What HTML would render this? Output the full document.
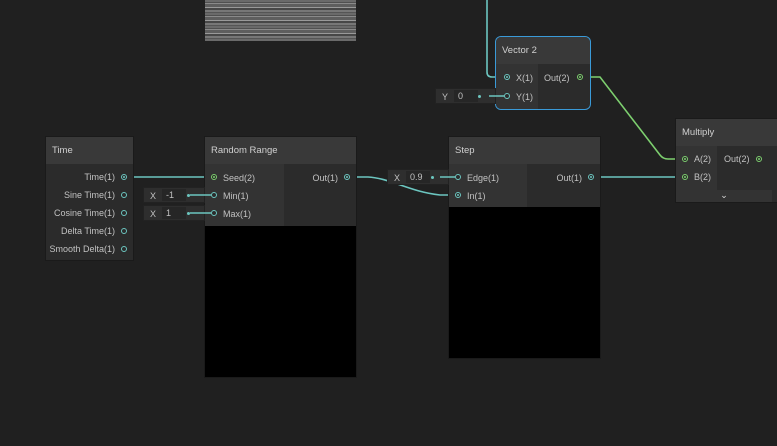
<!DOCTYPE html>
<html><head><style>
body{margin:0;width:777px;height:446px;background:#202020;overflow:hidden;position:relative;font-family:"Liberation Sans",sans-serif;font-size:9px;color:#c2c2c2}
.n{position:absolute;background:#2b2b2b;box-shadow:0 0 0 1px #1a1a1a}
.h{position:absolute;left:0;right:0;top:0;height:27px;background:#393939;color:#d0d0d0;font-size:9.5px;line-height:27px;padding-left:6px;box-sizing:border-box}
.in{position:absolute;background:#333}
.t{position:absolute;white-space:nowrap;line-height:12px}
.p{position:absolute;width:4px;height:4px;border:1.3px solid #6cc6c0;border-radius:50%;background:#2b2b2b;z-index:3}
.p.f::after{content:"";position:absolute;left:1px;top:1px;width:2px;height:2px;background:#6cc6c0;border-radius:50%}
.p.g{border-color:#7dcf6f}.p.g::after{background:#7dcf6f}
.box{position:absolute;height:16px;background:#2e2e2e;border:1px solid #222;box-sizing:border-box}
.box .l{position:absolute;left:6px;top:2px;line-height:12px}
.box .v{position:absolute;left:18px;top:1px;width:24px;height:12px;background:#262626;padding-left:4px;line-height:12px;box-sizing:border-box}
.box .d{position:absolute;right:14px;top:6px;width:3px;height:3px;background:#6cc6c0;border-radius:50%}
</style></head><body>
<div style="position:absolute;left:205px;top:0;width:151px;height:41px;background:repeating-linear-gradient(180deg,#6a6a6a 0,#6a6a6a 2px,#505050 2px,#505050 3px,#8a8a8a 3px,#8a8a8a 4px,#5e5e5e 4px,#5e5e5e 7px,#999 7px,#999 8px,#474747 8px,#474747 10px,#777 10px,#777 12px,#555 12px,#555 13px)"></div>

<svg style="position:absolute;left:0;top:0" width="777" height="446">
<g fill="none" stroke-width="1.6">
<path d="M128 177 L211 177" stroke="#6cc6c0"/>
<path d="M350 177 L368 177 C390 178 410 192 440 195 L454 195" stroke="#6cc6c0"/>
<path d="M593 177 L682 177" stroke="#6cc6c0"/>
<path d="M487 0 L487 72 Q487 77 492 77 L504 77" stroke="#6cc6c0"/>
<path d="M583 77 L600 77 L660 155 Q663 159 668 159 L682 159" stroke="#7dcf6f"/>
<path d="M761 159 L777 159" stroke="#7dcf6f"/>
</g></svg>

<!-- Time -->
<div class="n" style="left:46px;top:137px;width:87px;height:123px">
<div class="h">Time</div>
<div class="t" style="right:18px;top:34px">Time(1)</div>
<div class="t" style="right:18px;top:52px">Sine Time(1)</div>
<div class="t" style="right:18px;top:70px">Cosine Time(1)</div>
<div class="t" style="right:18px;top:88px">Delta Time(1)</div>
<div class="t" style="right:18px;top:106px">Smooth Delta(1)</div>
<div class="p f" style="left:75px;top:37px"></div>
<div class="p" style="left:75px;top:55px"></div>
<div class="p" style="left:75px;top:73px"></div>
<div class="p" style="left:75px;top:91px"></div>
<div class="p" style="left:75px;top:109px"></div>
</div>

<!-- Random Range -->
<div class="n" style="left:205px;top:137px;width:151px;height:240px">
<div class="h">Random Range</div>
<div class="in" style="left:0;top:27px;width:79px;height:62px"></div>
<div class="p f g" style="left:6px;top:37px"></div>
<div class="p" style="left:6px;top:55px"></div>
<div class="p" style="left:6px;top:73px"></div>
<div class="t" style="left:18px;top:35px">Seed(2)</div>
<div class="t" style="left:18px;top:53px">Min(1)</div>
<div class="t" style="left:18px;top:71px">Max(1)</div>
<div class="t" style="right:18px;top:35px">Out(1)</div>
<div class="p f" style="right:6px;top:37px"></div>
<div style="position:absolute;left:0;top:89px;width:151px;height:151px;background:#000"></div>
</div>
<div class="box" style="left:143px;top:187px;width:62px"><span class="l">X</span><span class="v">-1</span><span class="d"></span></div>
<div class="box" style="left:143px;top:205px;width:62px"><span class="l">X</span><span class="v">1</span><span class="d"></span></div>

<!-- Step -->
<div class="n" style="left:449px;top:137px;width:151px;height:221px">
<div class="h">Step</div>
<div class="in" style="left:0;top:27px;width:78px;height:43px"></div>
<div class="p" style="left:6px;top:37px"></div>
<div class="p f" style="left:6px;top:55px"></div>
<div class="t" style="left:18px;top:35px">Edge(1)</div>
<div class="t" style="left:18px;top:53px">In(1)</div>
<div class="t" style="right:18px;top:35px">Out(1)</div>
<div class="p f" style="right:6px;top:37px"></div>
<div style="position:absolute;left:0;top:70px;width:151px;height:151px;background:#000"></div>
</div>
<div class="box" style="left:387px;top:169px;width:62px"><span class="l">X</span><span class="v">0.9</span><span class="d"></span></div>

<!-- Vector 2 -->
<div class="n" style="left:496px;top:37px;width:94px;height:72px;border-radius:5px;box-shadow:0 0 0 1px #3a9ad8;overflow:hidden">
<div class="h">Vector 2</div>
<div class="in" style="left:0;top:27px;width:42px;height:45px"></div>
<div class="p f" style="left:8px;top:37px"></div>
<div class="p" style="left:8px;top:56px"></div>
<div class="t" style="left:20px;top:35px">X(1)</div>
<div class="t" style="left:20px;top:54px">Y(1)</div>
<div class="t" style="left:48px;top:35px">Out(2)</div>
<div class="p f g" style="left:81px;top:37px"></div>
</div>
<div class="box" style="left:435px;top:88px;width:61px"><span class="l">Y</span><span class="v">0</span><span class="d"></span></div>

<!-- Multiply -->
<div class="n" style="left:676px;top:119px;width:101px;height:83px">
<div class="h">Multiply</div>
<div class="in" style="left:0;top:27px;width:41px;height:44px"></div>
<div class="p f g" style="left:6px;top:37px"></div>
<div class="p f g" style="left:6px;top:55px"></div>
<div class="t" style="left:18px;top:34px">A(2)</div>
<div class="t" style="left:18px;top:52px">B(2)</div>
<div class="t" style="left:48px;top:34px">Out(2)</div>
<div class="p f g" style="left:80px;top:37px"></div>
<div style="position:absolute;left:0;top:71px;width:96px;height:12px;background:#333;text-align:center;line-height:10px;color:#ddd;font-size:9px">&#8964;</div>
</div>

<svg style="position:absolute;left:0;top:0;z-index:2" width="777" height="446">
<g fill="none" stroke-width="1.6" stroke="#6cc6c0">
<path d="M190 195 L211 195 M190 213 L211 213 M440 177 L455 177 M489 96 L504 96"/>
</g></svg>
</body></html>
